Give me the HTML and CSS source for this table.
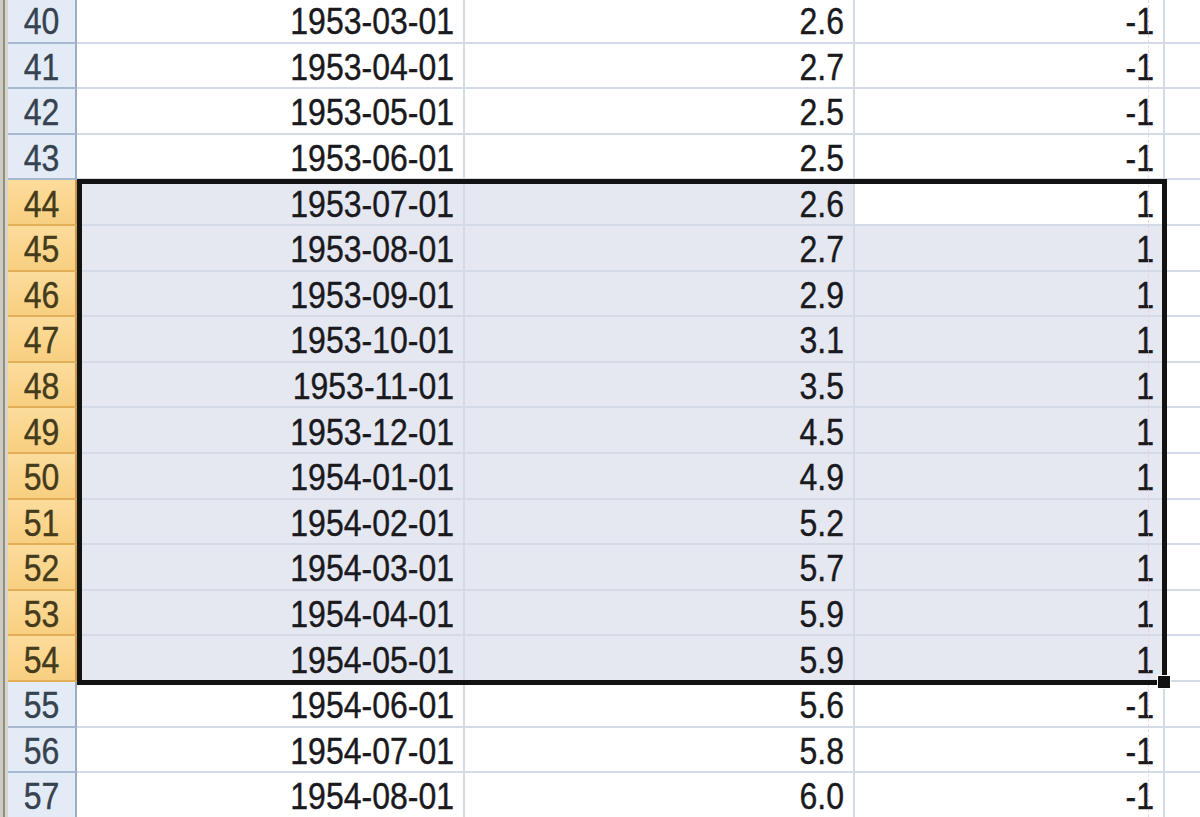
FILE: index.html
```html
<!DOCTYPE html>
<html>
<head>
<meta charset="utf-8">
<link rel="stylesheet" href="styles.css">
</head>
<body>
<div class="sheet">
  <div class="grid">
    <div class="frame"></div><div class="rowhead"><span class="txt">40</span></div><div class="cell"><span class="txt">1953-03-01</span></div><div class="cell"><span class="txt">2.6</span></div><div class="cell"><span class="txt">-1</span></div><div class="cell last"></div>
    <div class="frame"></div><div class="rowhead"><span class="txt">41</span></div><div class="cell"><span class="txt">1953-04-01</span></div><div class="cell"><span class="txt">2.7</span></div><div class="cell"><span class="txt">-1</span></div><div class="cell last"></div>
    <div class="frame"></div><div class="rowhead"><span class="txt">42</span></div><div class="cell"><span class="txt">1953-05-01</span></div><div class="cell"><span class="txt">2.5</span></div><div class="cell"><span class="txt">-1</span></div><div class="cell last"></div>
    <div class="frame"></div><div class="rowhead"><span class="txt">43</span></div><div class="cell"><span class="txt">1953-06-01</span></div><div class="cell"><span class="txt">2.5</span></div><div class="cell"><span class="txt">-1</span></div><div class="cell last"></div>
    <div class="frame"></div><div class="rowhead on"><span class="txt">44</span></div><div class="cell sel"><span class="txt">1953-07-01</span></div><div class="cell sel"><span class="txt">2.6</span></div><div class="cell sel active"><span class="txt">1</span></div><div class="cell last"></div>
    <div class="frame"></div><div class="rowhead on"><span class="txt">45</span></div><div class="cell sel"><span class="txt">1953-08-01</span></div><div class="cell sel"><span class="txt">2.7</span></div><div class="cell sel"><span class="txt">1</span></div><div class="cell last"></div>
    <div class="frame"></div><div class="rowhead on"><span class="txt">46</span></div><div class="cell sel"><span class="txt">1953-09-01</span></div><div class="cell sel"><span class="txt">2.9</span></div><div class="cell sel"><span class="txt">1</span></div><div class="cell last"></div>
    <div class="frame"></div><div class="rowhead on"><span class="txt">47</span></div><div class="cell sel"><span class="txt">1953-10-01</span></div><div class="cell sel"><span class="txt">3.1</span></div><div class="cell sel"><span class="txt">1</span></div><div class="cell last"></div>
    <div class="frame"></div><div class="rowhead on"><span class="txt">48</span></div><div class="cell sel"><span class="txt">1953-11-01</span></div><div class="cell sel"><span class="txt">3.5</span></div><div class="cell sel"><span class="txt">1</span></div><div class="cell last"></div>
    <div class="frame"></div><div class="rowhead on"><span class="txt">49</span></div><div class="cell sel"><span class="txt">1953-12-01</span></div><div class="cell sel"><span class="txt">4.5</span></div><div class="cell sel"><span class="txt">1</span></div><div class="cell last"></div>
    <div class="frame"></div><div class="rowhead on"><span class="txt">50</span></div><div class="cell sel"><span class="txt">1954-01-01</span></div><div class="cell sel"><span class="txt">4.9</span></div><div class="cell sel"><span class="txt">1</span></div><div class="cell last"></div>
    <div class="frame"></div><div class="rowhead on"><span class="txt">51</span></div><div class="cell sel"><span class="txt">1954-02-01</span></div><div class="cell sel"><span class="txt">5.2</span></div><div class="cell sel"><span class="txt">1</span></div><div class="cell last"></div>
    <div class="frame"></div><div class="rowhead on"><span class="txt">52</span></div><div class="cell sel"><span class="txt">1954-03-01</span></div><div class="cell sel"><span class="txt">5.7</span></div><div class="cell sel"><span class="txt">1</span></div><div class="cell last"></div>
    <div class="frame"></div><div class="rowhead on"><span class="txt">53</span></div><div class="cell sel"><span class="txt">1954-04-01</span></div><div class="cell sel"><span class="txt">5.9</span></div><div class="cell sel"><span class="txt">1</span></div><div class="cell last"></div>
    <div class="frame"></div><div class="rowhead on"><span class="txt">54</span></div><div class="cell sel"><span class="txt">1954-05-01</span></div><div class="cell sel"><span class="txt">5.9</span></div><div class="cell sel"><span class="txt">1</span></div><div class="cell last"></div>
    <div class="frame"></div><div class="rowhead"><span class="txt">55</span></div><div class="cell"><span class="txt">1954-06-01</span></div><div class="cell"><span class="txt">5.6</span></div><div class="cell"><span class="txt">-1</span></div><div class="cell last"></div>
    <div class="frame"></div><div class="rowhead"><span class="txt">56</span></div><div class="cell"><span class="txt">1954-07-01</span></div><div class="cell"><span class="txt">5.8</span></div><div class="cell"><span class="txt">-1</span></div><div class="cell last"></div>
    <div class="frame"></div><div class="rowhead"><span class="txt">57</span></div><div class="cell"><span class="txt">1954-08-01</span></div><div class="cell"><span class="txt">6.0</span></div><div class="cell"><span class="txt">-1</span></div><div class="cell last"></div>
  </div>
  <div class="pagebreak"></div>
  <div class="selection"></div>
  <div class="handle"></div>
</div>
</body>
</html>
```
FILE: styles.css
```css
html, body {
  margin: 0;
  padding: 0;
  background: #ffffff;
  overflow: hidden;
}
.sheet {
  position: relative;
  width: 1200px;
  height: 817px;
  overflow: hidden;
  font-family: "Liberation Sans", Arial, sans-serif;
}
.grid {
  margin-top: -2px;
  display: grid;
  grid-template-columns: 8px 69px 388px 390px 310px 1fr;
  grid-auto-rows: 45.6px;
}
.cell {
  box-sizing: border-box;
  border-right: 2px solid #d4dae6;
  border-bottom: 2px solid #d4dae6;
  display: flex;
  align-items: center;
  justify-content: flex-end;
  padding-right: 9px;
  color: #1a1a1e;
  font-size: 32px;
  background: #ffffff;
}
.cell.sel {
  background: #e5e7f1;
}
.cell.active {
  background: #ffffff;
}
.cell.last {
  border-right: none;
}
.txt {
  display: inline-block;
  transform: scaleY(1.18);
  line-height: 1;
  padding-top: 3px;
  -webkit-text-stroke: 0.35px currentColor;
}
.frame {
  background: linear-gradient(to right, #cfcbc0 0, #cfcbc0 3px, #8f8d86 3px, #8f8d86 5px, #d8d5cc 5px, #d8d5cc 8px);
}
.rowhead {
  box-sizing: border-box;
  display: flex;
  align-items: center;
  justify-content: center;
  background: #e3ebf6;
  border-bottom: 2px solid #a7b8cf;
  border-right: 2px solid #9aabc2;
  color: #36424f;
  font-size: 32px;
}
.rowhead.on {
  background: linear-gradient(to bottom, #fcdc9c, #f8cf80);
  border-bottom: 2px solid #e3ae58;
  border-right: 2px solid #c99745;
  color: #433b1c;
}
.pagebreak {
  position: absolute;
  left: 1148px;
  top: 0;
  width: 0;
  height: 817px;
  border-left: 1px dashed #f2c3d6;
  opacity: 0.7;
}
.selection {
  position: absolute;
  left: 77px;
  top: 179px;
  width: 1090px;
  height: 506px;
  box-sizing: border-box;
  border: 5px solid #121212;
}
.handle {
  position: absolute;
  left: 1157px;
  top: 675px;
  width: 12px;
  height: 12px;
  background: #121212;
  border: 1px solid #ffffff;
}
```
